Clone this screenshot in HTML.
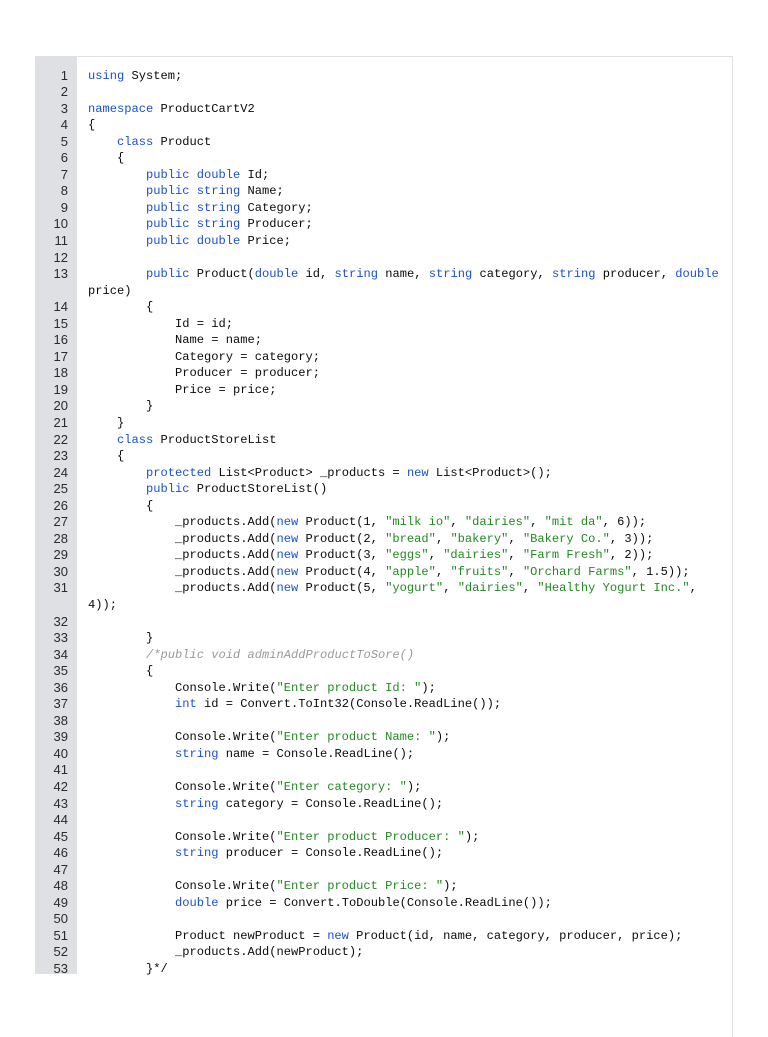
<!DOCTYPE html>
<html><head><meta charset="utf-8"><style>
html,body{margin:0;padding:0;background:#fff;width:768px;height:1024px;overflow:hidden}
.box{position:absolute;left:35px;top:56px;width:697px;height:980px;border-top:1px solid #dde1e6;border-right:1px solid #dde1e6}
.gut{position:absolute;left:35px;top:57px;width:42px;height:917px;background:#dfe0e3}
.rows{position:absolute;left:0;top:67.5px;width:768px}
.r{height:16.56px;position:relative;white-space:pre;font-family:"Liberation Mono",monospace;font-size:12.08px;line-height:16.56px;color:#0a0a0a}
.n{position:absolute;left:35px;width:33px;text-align:right;font-family:"Liberation Sans",sans-serif;font-size:13px;color:#2a2a2a}
.c{position:absolute;left:88px}
.k{color:#1a4fd6}.s{color:#218a21}.m{color:#999;font-style:italic}
</style></head><body>
<div class="box"></div><div class="gut"></div>
<div class="rows">
<div class="r"><span class="n">1</span><span class="c"><span class="k">using</span> System;</span></div>
<div class="r"><span class="n">2</span></div>
<div class="r"><span class="n">3</span><span class="c"><span class="k">namespace</span> ProductCartV2</span></div>
<div class="r"><span class="n">4</span><span class="c">{</span></div>
<div class="r"><span class="n">5</span><span class="c">    <span class="k">class</span> Product</span></div>
<div class="r"><span class="n">6</span><span class="c">    {</span></div>
<div class="r"><span class="n">7</span><span class="c">        <span class="k">public double</span> Id;</span></div>
<div class="r"><span class="n">8</span><span class="c">        <span class="k">public string</span> Name;</span></div>
<div class="r"><span class="n">9</span><span class="c">        <span class="k">public string</span> Category;</span></div>
<div class="r"><span class="n">10</span><span class="c">        <span class="k">public string</span> Producer;</span></div>
<div class="r"><span class="n">11</span><span class="c">        <span class="k">public double</span> Price;</span></div>
<div class="r"><span class="n">12</span></div>
<div class="r"><span class="n">13</span><span class="c">        <span class="k">public</span> Product(<span class="k">double</span> id, <span class="k">string</span> name, <span class="k">string</span> category, <span class="k">string</span> producer, <span class="k">double</span></span></div>
<div class="r"><span class="c">price)</span></div>
<div class="r"><span class="n">14</span><span class="c">        {</span></div>
<div class="r"><span class="n">15</span><span class="c">            Id = id;</span></div>
<div class="r"><span class="n">16</span><span class="c">            Name = name;</span></div>
<div class="r"><span class="n">17</span><span class="c">            Category = category;</span></div>
<div class="r"><span class="n">18</span><span class="c">            Producer = producer;</span></div>
<div class="r"><span class="n">19</span><span class="c">            Price = price;</span></div>
<div class="r"><span class="n">20</span><span class="c">        }</span></div>
<div class="r"><span class="n">21</span><span class="c">    }</span></div>
<div class="r"><span class="n">22</span><span class="c">    <span class="k">class</span> ProductStoreList</span></div>
<div class="r"><span class="n">23</span><span class="c">    {</span></div>
<div class="r"><span class="n">24</span><span class="c">        <span class="k">protected</span> List&lt;Product&gt; _products = <span class="k">new</span> List&lt;Product&gt;();</span></div>
<div class="r"><span class="n">25</span><span class="c">        <span class="k">public</span> ProductStoreList()</span></div>
<div class="r"><span class="n">26</span><span class="c">        {</span></div>
<div class="r"><span class="n">27</span><span class="c">            _products.Add(<span class="k">new</span> Product(1, <span class="s">"milk io"</span>, <span class="s">"dairies"</span>, <span class="s">"mit da"</span>, 6));</span></div>
<div class="r"><span class="n">28</span><span class="c">            _products.Add(<span class="k">new</span> Product(2, <span class="s">"bread"</span>, <span class="s">"bakery"</span>, <span class="s">"Bakery Co."</span>, 3));</span></div>
<div class="r"><span class="n">29</span><span class="c">            _products.Add(<span class="k">new</span> Product(3, <span class="s">"eggs"</span>, <span class="s">"dairies"</span>, <span class="s">"Farm Fresh"</span>, 2));</span></div>
<div class="r"><span class="n">30</span><span class="c">            _products.Add(<span class="k">new</span> Product(4, <span class="s">"apple"</span>, <span class="s">"fruits"</span>, <span class="s">"Orchard Farms"</span>, 1.5));</span></div>
<div class="r"><span class="n">31</span><span class="c">            _products.Add(<span class="k">new</span> Product(5, <span class="s">"yogurt"</span>, <span class="s">"dairies"</span>, <span class="s">"Healthy Yogurt Inc."</span>,</span></div>
<div class="r"><span class="c">4));</span></div>
<div class="r"><span class="n">32</span></div>
<div class="r"><span class="n">33</span><span class="c">        }</span></div>
<div class="r"><span class="n">34</span><span class="c">        <span class="m">/*public void adminAddProductToSore()</span></span></div>
<div class="r"><span class="n">35</span><span class="c">        {</span></div>
<div class="r"><span class="n">36</span><span class="c">            Console.Write(<span class="s">"Enter product Id: "</span>);</span></div>
<div class="r"><span class="n">37</span><span class="c">            <span class="k">int</span> id = Convert.ToInt32(Console.ReadLine());</span></div>
<div class="r"><span class="n">38</span></div>
<div class="r"><span class="n">39</span><span class="c">            Console.Write(<span class="s">"Enter product Name: "</span>);</span></div>
<div class="r"><span class="n">40</span><span class="c">            <span class="k">string</span> name = Console.ReadLine();</span></div>
<div class="r"><span class="n">41</span></div>
<div class="r"><span class="n">42</span><span class="c">            Console.Write(<span class="s">"Enter category: "</span>);</span></div>
<div class="r"><span class="n">43</span><span class="c">            <span class="k">string</span> category = Console.ReadLine();</span></div>
<div class="r"><span class="n">44</span></div>
<div class="r"><span class="n">45</span><span class="c">            Console.Write(<span class="s">"Enter product Producer: "</span>);</span></div>
<div class="r"><span class="n">46</span><span class="c">            <span class="k">string</span> producer = Console.ReadLine();</span></div>
<div class="r"><span class="n">47</span></div>
<div class="r"><span class="n">48</span><span class="c">            Console.Write(<span class="s">"Enter product Price: "</span>);</span></div>
<div class="r"><span class="n">49</span><span class="c">            <span class="k">double</span> price = Convert.ToDouble(Console.ReadLine());</span></div>
<div class="r"><span class="n">50</span></div>
<div class="r"><span class="n">51</span><span class="c">            Product newProduct = <span class="k">new</span> Product(id, name, category, producer, price);</span></div>
<div class="r"><span class="n">52</span><span class="c">            _products.Add(newProduct);</span></div>
<div class="r"><span class="n">53</span><span class="c">        }*/</span></div>
</div>
</body></html>
